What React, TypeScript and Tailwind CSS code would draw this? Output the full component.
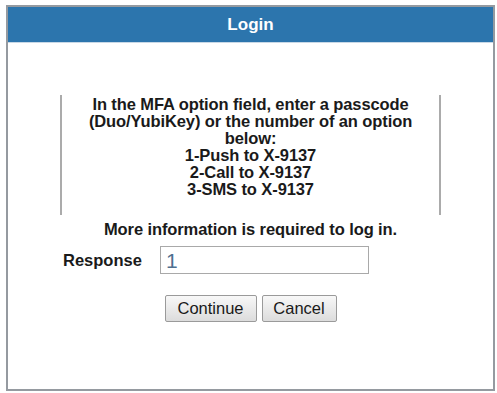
export default function App() {
  return (
    <div
      className="w-[497px] h-[393px] bg-white pt-[5px] pl-[6px]"
      style={{ fontFamily: '"Liberation Sans", Arial, sans-serif' }}
    >
      <div className="w-[489px] h-[386px] border-2 border-[#959aa0] flex flex-col">
        {/* Header */}
        <div className="h-[36px] bg-[#2c75ad] border-b border-[#c8d8e6] flex items-center justify-center">
          <span className="text-white font-bold text-[17px]">Login</span>
        </div>

        {/* Body */}
        <div className="flex flex-col items-center pt-[52px]">
          <div className="w-[381px] h-[120px] border-l-2 border-r-2 border-[#ababab] text-center font-bold text-[16.5px] leading-[17px] text-[#1a1a1a] pt-[1px] tracking-[-0.1px]">
            <div>In the MFA option field, enter a passcode</div>
            <div>(Duo/YubiKey) or the number of an option</div>
            <div>below:</div>
            <div>1-Push to X-9137</div>
            <div>2-Call to X-9137</div>
            <div>3-SMS to X-9137</div>
          </div>

          <div className="mt-[6px] font-bold text-[16.5px] leading-[17px] text-[#1a1a1a] tracking-[-0.1px]">
            More information is required to log in.
          </div>
        </div>

        <div className="flex items-center mt-[8px] ml-[55px]">
          <span className="w-[97px] font-bold text-[16.5px] text-[#1a1a1a]">Response</span>
          <div className="w-[209px] h-[28px] border border-[#a9a9a9] flex items-center px-[5px]">
            <span className="text-[21px] text-[#4f6f8f] leading-none">1</span>
          </div>
        </div>

        <div className="flex justify-center gap-[5px] mt-[21px]">
          <button className="w-[92px] h-[27px] border border-[#9a9a9a] rounded-[2px] bg-gradient-to-b from-[#f8f8f8] to-[#dcdcdc] text-[16.5px] text-[#1a1a1a]">
            Continue
          </button>
          <button className="w-[75px] h-[27px] border border-[#9a9a9a] rounded-[2px] bg-gradient-to-b from-[#f8f8f8] to-[#dcdcdc] text-[16.5px] text-[#1a1a1a]">
            Cancel
          </button>
        </div>
      </div>
    </div>
  );
}
